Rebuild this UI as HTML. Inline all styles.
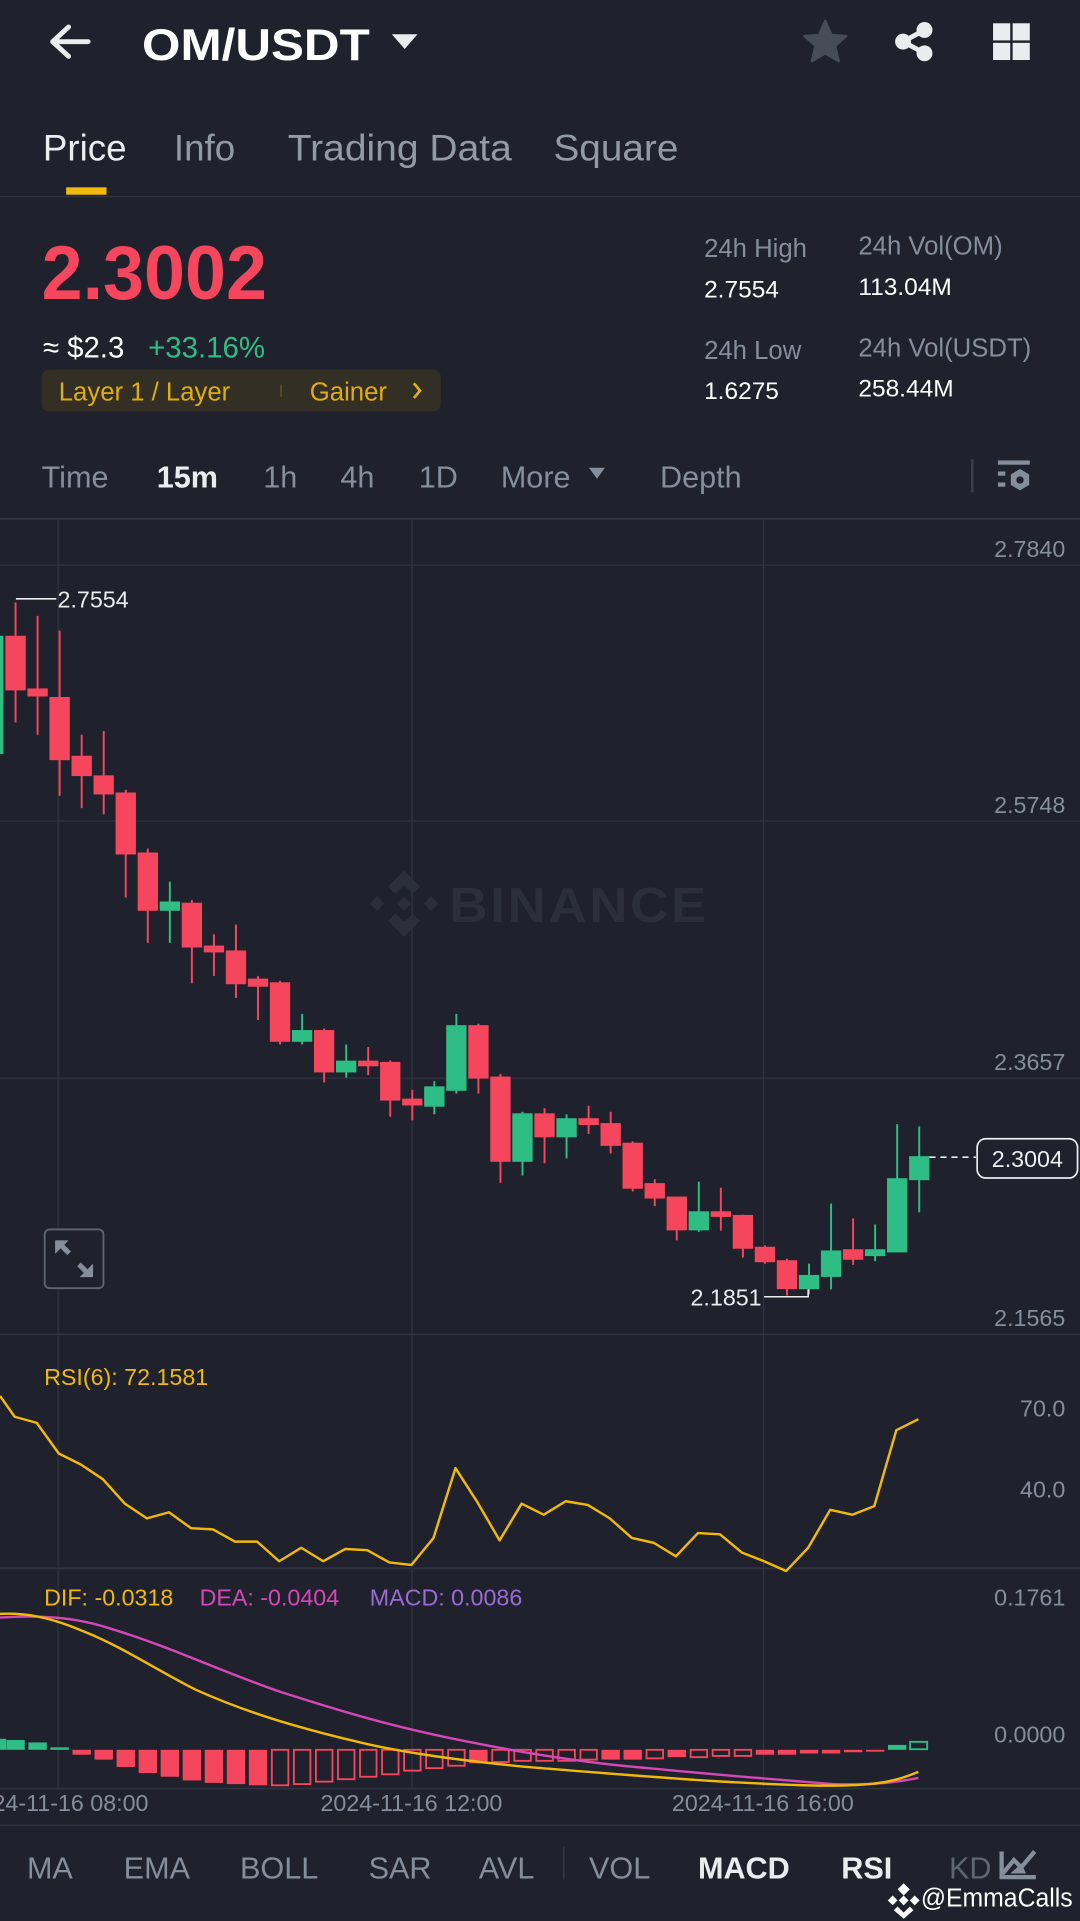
<!DOCTYPE html>
<html><head><meta charset="utf-8"><style>
html,body{margin:0;padding:0;background:#1f222c;overflow:hidden}
svg{display:block}
text{font-family:"Liberation Sans",sans-serif}
</style></head><body>
<svg width="1080" height="1921" viewBox="0 0 882 1568.8" xmlns="http://www.w3.org/2000/svg">
<rect width="882" height="1569" fill="#1f222c"/>
<g stroke="#eaecef" stroke-width="4" fill="none" stroke-linecap="round" stroke-linejoin="round"><path d="M72 34H43M56 22L43 34L56 46"/></g>
<text x="116" y="49" font-size="36" font-weight="bold" fill="#ffffff" textLength="186" lengthAdjust="spacingAndGlyphs">OM/USDT</text>
<path d="M320 28H341L330.5 40Z" fill="#eaecef"/>
<path d="M674 17L679 28.5L691 29.5L682 37.5L685 50L674 43.5L663 50L666 37.5L657 29.5L669 28.5Z" fill="#474d57" stroke="#474d57" stroke-width="2" stroke-linejoin="round"/>
<g fill="#eaecef"><circle cx="755" cy="24.5" r="6.5"/><circle cx="737.5" cy="34" r="6.5"/><circle cx="755" cy="43.5" r="6.5"/></g>
<path d="M755 24.5L737.5 34L755 43.5" stroke="#eaecef" stroke-width="4" fill="none"/>
<g fill="#eaecef"><rect x="811" y="19" width="14" height="14"/><rect x="827" y="19" width="14" height="14"/><rect x="811" y="35" width="14" height="14"/><rect x="827" y="35" width="14" height="14"/></g>
<g font-size="30" fill="#929aa5"><text x="35" y="131" fill="#eaecef">Price</text><text x="142" y="131">Info</text><text x="235" y="131" textLength="183" lengthAdjust="spacingAndGlyphs">Trading Data</text><text x="452" y="131" textLength="102" lengthAdjust="spacingAndGlyphs">Square</text></g>
<rect x="54" y="153" width="33" height="6" fill="#f0b90b"/>
<rect x="0" y="160" width="882" height="1" fill="#2f3440"/>
<text x="34" y="244" font-size="62" font-weight="bold" fill="#f6465d" textLength="184" lengthAdjust="spacingAndGlyphs">2.3002</text>
<text x="35" y="292" font-size="24" fill="#ffffff">≈ $2.3</text>
<text x="121" y="292" font-size="24" fill="#2ebd85">+33.16%</text>
<rect x="34" y="302" width="326" height="34" rx="6" fill="#332f24"/>
<g font-size="21" fill="#e0ad10"><text x="48" y="327">Layer 1 / Layer</text><text x="253" y="327">Gainer</text></g>
<rect x="229" y="314" width="1" height="10" fill="#6b5a20"/>
<path d="M338 313L343 319L338 325" stroke="#e0ad10" stroke-width="2.2" fill="none"/>
<g font-size="21" fill="#848e9c"><text x="575" y="210">24h High</text><text x="701" y="208">24h Vol(OM)</text><text x="575" y="293">24h Low</text><text x="701" y="291">24h Vol(USDT)</text></g>
<g font-size="20" fill="#ffffff"><text x="575" y="243">2.7554</text><text x="701" y="241">113.04M</text><text x="575" y="326">1.6275</text><text x="701" y="324">258.44M</text></g>
<g font-size="25" fill="#848e9c"><text x="34" y="398">Time</text><text x="128" y="398" fill="#eaecef" font-weight="bold">15m</text><text x="215" y="398">1h</text><text x="278" y="398">4h</text><text x="342" y="398">1D</text><text x="409" y="398">More</text><text x="539" y="398">Depth</text></g>
<path d="M481 382H494L487.5 391Z" fill="#848e9c"/>
<rect x="793" y="375" width="2" height="27" fill="#3a3f4a"/>
<g fill="#848e9c"><rect x="815" y="376" width="26" height="3.5"/><rect x="815" y="385" width="6" height="3.5"/><rect x="815" y="394" width="6" height="3.5"/><path d="M833 383L840.5 387.5V396L833 400.5L825.5 396V387.5Z"/></g>
<circle cx="833" cy="392" r="3" fill="#1f222c"/>
<rect x="0" y="423" width="882" height="1.5" fill="#2f3440"/>
<g fill="#2f3440"><rect x="0" y="461" width="882" height="1"/><rect x="0" y="670" width="882" height="1"/><rect x="0" y="880" width="882" height="1"/><rect x="0" y="1089" width="882" height="1.3"/><rect x="0" y="1280" width="882" height="1.5"/><rect x="0" y="1460" width="882" height="1.3"/><rect x="0" y="1490" width="882" height="1.3"/>
<rect x="47" y="424" width="1" height="1036"/><rect x="336" y="424" width="1" height="1036"/><rect x="623" y="424" width="1" height="1036"/></g>
<g font-size="19" fill="#848e9c" text-anchor="end"><text x="870" y="455">2.7840</text><text x="870" y="664">2.5748</text><text x="870" y="874">2.3657</text><text x="870" y="1083">2.1565</text><text x="870" y="1157">70.0</text><text x="870" y="1223">40.0</text><text x="870" y="1311">0.1761</text><text x="870" y="1423">0.0000</text></g>
<g fill="#2b2f3a"><path d="M330 711L343 724L337 730L330 723L323 730L317 724Z"/><path d="M302 738L308 732L314 738L308 744Z"/><path d="M346 738L352 732L358 738L352 744Z"/><path d="M324 738L330 732L336 738L330 744Z"/><path d="M317 752L323 746L330 753L337 746L343 752L330 765Z"/></g>
<text x="367" y="753" font-size="40" font-weight="bold" fill="#2b2f3a" letter-spacing="2" textLength="212" lengthAdjust="spacingAndGlyphs">BINANCE</text>
<g stroke-width="1.6" fill="#2ebd85" stroke="#2ebd85"><rect x="-13" y="520" width="15" height="95"/></g>
<g stroke-width="1.6" fill="#f6465d" stroke="#f6465d">
<line x1="12.7" y1="492" x2="12.7" y2="590"/><rect x="5.2" y="520" width="15" height="43"/>
<line x1="30.7" y1="503" x2="30.7" y2="600"/><rect x="23.2" y="563" width="15" height="5"/>
<line x1="48.7" y1="515" x2="48.7" y2="650"/><rect x="41.2" y="570" width="15" height="50"/>
<line x1="66.7" y1="600" x2="66.7" y2="660"/><rect x="59.2" y="618" width="15" height="15"/>
<line x1="84.7" y1="597" x2="84.7" y2="665"/><rect x="77.2" y="634" width="15" height="14"/>
<line x1="102.7" y1="645" x2="102.7" y2="733"/><rect x="95.2" y="648" width="15" height="49"/>
<line x1="120.7" y1="693" x2="120.7" y2="770"/><rect x="113.2" y="697" width="15" height="46"/>
<line x1="156.7" y1="735" x2="156.7" y2="803"/><rect x="149.2" y="738" width="15" height="35"/>
<line x1="174.7" y1="763" x2="174.7" y2="797"/><rect x="167.2" y="773" width="15" height="4"/>
<line x1="192.7" y1="755" x2="192.7" y2="815"/><rect x="185.2" y="777" width="15" height="26"/>
<line x1="210.7" y1="797" x2="210.7" y2="833"/><rect x="203.2" y="800" width="15" height="5"/>
<line x1="228.7" y1="801" x2="228.7" y2="853"/><rect x="221.2" y="803" width="15" height="47"/>
<line x1="264.7" y1="840" x2="264.7" y2="884"/><rect x="257.2" y="842" width="15" height="33"/>
<line x1="300.7" y1="855" x2="300.7" y2="878"/><rect x="293.2" y="867" width="15" height="3"/>
<line x1="318.7" y1="866" x2="318.7" y2="912"/><rect x="311.2" y="868" width="15" height="30"/>
<line x1="336.7" y1="890" x2="336.7" y2="915"/><rect x="329.2" y="898" width="15" height="4"/>
<line x1="390.7" y1="836" x2="390.7" y2="893"/><rect x="383.2" y="838" width="15" height="42"/>
<line x1="408.7" y1="877" x2="408.7" y2="966"/><rect x="401.2" y="880" width="15" height="68"/>
<line x1="444.7" y1="905" x2="444.7" y2="950"/><rect x="437.2" y="910" width="15" height="18"/>
<line x1="480.7" y1="903" x2="480.7" y2="926"/><rect x="473.2" y="914" width="15" height="4"/>
<line x1="498.7" y1="908" x2="498.7" y2="942"/><rect x="491.2" y="918" width="15" height="17"/>
<line x1="516.7" y1="932" x2="516.7" y2="973"/><rect x="509.2" y="934" width="15" height="36"/>
<line x1="534.7" y1="963" x2="534.7" y2="985"/><rect x="527.2" y="967" width="15" height="11"/>
<line x1="552.7" y1="978" x2="552.7" y2="1013"/><rect x="545.2" y="978" width="15" height="26"/>
<line x1="588.7" y1="970" x2="588.7" y2="1005"/><rect x="581.2" y="990" width="15" height="3"/>
<line x1="606.7" y1="992" x2="606.7" y2="1027"/><rect x="599.2" y="993" width="15" height="26"/>
<line x1="624.7" y1="1017" x2="624.7" y2="1032"/><rect x="617.2" y="1019" width="15" height="11"/>
<line x1="642.7" y1="1028" x2="642.7" y2="1058"/><rect x="635.2" y="1030" width="15" height="22"/>
<line x1="696.7" y1="995" x2="696.7" y2="1033"/><rect x="689.2" y="1021" width="15" height="7"/>
</g>
<g stroke-width="1.6" fill="#2ebd85" stroke="#2ebd85">
<line x1="138.7" y1="720" x2="138.7" y2="770"/><rect x="131.2" y="737" width="15" height="6"/>
<line x1="246.7" y1="828" x2="246.7" y2="853"/><rect x="239.2" y="842" width="15" height="8"/>
<line x1="282.7" y1="853" x2="282.7" y2="880"/><rect x="275.2" y="867" width="15" height="8"/>
<line x1="354.7" y1="883" x2="354.7" y2="910"/><rect x="347.2" y="888" width="15" height="15"/>
<line x1="372.7" y1="828" x2="372.7" y2="893"/><rect x="365.2" y="838" width="15" height="52"/>
<line x1="426.7" y1="908" x2="426.7" y2="960"/><rect x="419.2" y="910" width="15" height="38"/>
<line x1="462.7" y1="910" x2="462.7" y2="946"/><rect x="455.2" y="914" width="15" height="14"/>
<line x1="570.7" y1="965" x2="570.7" y2="1006"/><rect x="563.2" y="990" width="15" height="14"/>
<line x1="660.7" y1="1032" x2="660.7" y2="1057"/><rect x="653.2" y="1042" width="15" height="10"/>
<line x1="678.7" y1="983" x2="678.7" y2="1053"/><rect x="671.2" y="1022" width="15" height="20"/>
<line x1="714.7" y1="1000" x2="714.7" y2="1030"/><rect x="707.2" y="1021" width="15" height="4"/>
<line x1="732.7" y1="918" x2="732.7" y2="1022"/><rect x="725.2" y="963" width="15" height="59"/>
<line x1="750.7" y1="920" x2="750.7" y2="990"/><rect x="743.2" y="945" width="15" height="18"/>
</g>
<path d="M13 489H46" stroke="#eaecef" stroke-width="1.3"/>
<text x="47" y="496" font-size="19" fill="#eaecef">2.7554</text>
<path d="M624 1059H660V1053" stroke="#eaecef" stroke-width="1.3" fill="none"/>
<text x="622" y="1066" font-size="19" fill="#eaecef" text-anchor="end">2.1851</text>
<path d="M759 945H797" stroke="#eaecef" stroke-width="1.3" stroke-dasharray="5 4"/>
<rect x="798" y="930" width="82" height="32" rx="7" fill="#1f222c" stroke="#eaecef" stroke-width="1.4"/>
<text x="839" y="953" font-size="19" fill="#eaecef" text-anchor="middle">2.3004</text>
<rect x="36.5" y="1004" width="48" height="48" rx="4" fill="#1f222c" stroke="#5f6673" stroke-width="1.5"/>
<g fill="#848e9c"><path d="M45 1013H56L52.5 1016.5L58 1022L55 1025L49.5 1019.5L45 1024Z"/><path d="M76 1043H65L68.5 1039.5L63 1034L66 1031L71.5 1036.5L76 1032Z"/></g>
<text x="36" y="1131" font-size="19" fill="#f0b90b">RSI(6): 72.1581</text>
<polyline fill="none" stroke="#f0b90b" stroke-width="2" stroke-linejoin="round" points="0,1140 12,1157 30,1162 48,1187 66,1196 84,1208 102,1228 120,1240 138,1235 156,1248 174,1249 192,1259 210,1259 228,1275 246,1264 264,1275 282,1265 300,1266 318,1276 336,1278 354,1256 372,1199 390,1227 408,1258 426,1228 444,1237 462,1226 480,1229 498,1240 516,1256 534,1260 552,1271 570,1252 588,1253 606,1268 624,1275 642,1283 660,1264 678,1233 696,1237 714,1230 732,1168 750,1159"/>
<text x="36" y="1311" font-size="19" fill="#f0b90b">DIF: -0.0318</text>
<text x="163" y="1311" font-size="19" fill="#d548b8">DEA: -0.0404</text>
<text x="302" y="1311" font-size="19" fill="#9b6ad6">MACD: 0.0086</text>
<g fill="#2ebd85"><rect x="-5" y="1420" width="10" height="9"/><rect x="5.2" y="1421" width="15" height="8"/><rect x="23.2" y="1423" width="15" height="6"/><rect x="41.2" y="1427" width="15" height="2"/><rect x="725.2" y="1425" width="15" height="4"/></g>
<rect x="743.2" y="1422.5" width="14" height="6" fill="none" stroke="#2ebd85" stroke-width="1.5"/>
<g fill="#f6465d"><rect x="59.2" y="1429" width="15" height="4"/><rect x="77.2" y="1429" width="15" height="8"/><rect x="95.2" y="1429" width="15" height="14"/><rect x="113.2" y="1429" width="15" height="19"/><rect x="131.2" y="1429" width="15" height="22"/><rect x="149.2" y="1429" width="15" height="25"/><rect x="167.2" y="1429" width="15" height="27"/><rect x="185.2" y="1429" width="15" height="28"/><rect x="203.2" y="1429" width="15" height="29"/><rect x="383.2" y="1429" width="15" height="11"/><rect x="491.2" y="1429" width="15" height="8"/><rect x="509.2" y="1429" width="15" height="8"/><rect x="545.2" y="1429" width="15" height="6"/><rect x="617.2" y="1429" width="15" height="4"/><rect x="635.2" y="1429" width="15" height="4"/><rect x="653.2" y="1429" width="15" height="3"/><rect x="671.2" y="1429" width="15" height="3"/><rect x="689.2" y="1429" width="15" height="2"/><rect x="707.2" y="1429" width="15" height="1.5"/></g>
<g fill="none" stroke="#f6465d" stroke-width="1.5"><rect x="222" y="1429" width="13.5" height="29"/><rect x="240" y="1429" width="13.5" height="28"/><rect x="258" y="1429" width="13.5" height="26"/><rect x="276" y="1429" width="13.5" height="24"/><rect x="294" y="1429" width="13.5" height="22"/><rect x="312" y="1429" width="13.5" height="20"/><rect x="330" y="1429" width="13.5" height="17"/><rect x="348" y="1429" width="13.5" height="15"/><rect x="366" y="1429" width="13.5" height="13"/><rect x="402" y="1429" width="13.5" height="10"/><rect x="420" y="1429" width="13.5" height="9"/><rect x="438" y="1429" width="13.5" height="9"/><rect x="456" y="1429" width="13.5" height="9"/><rect x="474" y="1429" width="13.5" height="8"/><rect x="528" y="1429" width="13.5" height="7"/><rect x="564" y="1429" width="13.5" height="6"/><rect x="582" y="1429" width="13.5" height="5"/><rect x="600" y="1429" width="13.5" height="5"/></g>
<path fill="none" stroke="#d548b8" stroke-width="2" d="M0,1321 C30,1319 60,1320 90,1330 C140,1345 180,1365 230,1382 C280,1398 320,1410 380,1422 C430,1432 480,1440 530,1444 C580,1449 630,1453 680,1457 C710,1458 730,1456 750,1452"/>
<path fill="none" stroke="#f0b90b" stroke-width="2" d="M0,1318 C20,1317 40,1320 70,1333 C100,1345 130,1365 160,1380 C200,1398 240,1410 290,1422 C330,1432 380,1438 430,1443 C480,1447 540,1452 590,1455 C630,1457 680,1460 710,1457 C730,1455 740,1451 750,1447"/>
<g font-size="19" fill="#848e9c" text-anchor="middle"><text x="47" y="1479">2024-11-16 08:00</text><text x="336" y="1479">2024-11-16 12:00</text><text x="623" y="1479">2024-11-16 16:00</text></g>
<g font-size="25" fill="#848e9c"><text x="22" y="1534">MA</text><text x="101" y="1534">EMA</text><text x="196" y="1534">BOLL</text><text x="301" y="1534">SAR</text><text x="391" y="1534">AVL</text><text x="481" y="1534">VOL</text><text x="570" y="1534" fill="#eaecef" font-weight="bold">MACD</text><text x="687" y="1534" fill="#eaecef" font-weight="bold">RSI</text><text x="775" y="1534" fill="#5f6673">KD</text></g>
<rect x="460" y="1508" width="1" height="27" fill="#3a3f4a"/>
<path d="M818 1512V1533H846M819 1530L828 1519L834 1525L845 1512" stroke="#848e9c" stroke-width="3.5" fill="none"/>
<path d="M825 1530L834 1522L838 1530Z" fill="#848e9c"/>
<g fill="#ffffff"><path d="M738 1538L743 1543L738 1548L733 1543Z"/><path d="M729 1548L733 1552L729 1556L725 1552Z"/><path d="M747 1548L751 1552L747 1556L743 1552Z"/><path d="M738 1548L742 1552L738 1556L734 1552Z"/><path d="M733 1557L738 1562L743 1557L746 1560L738 1567L730 1560Z"/></g>
<text x="752" y="1557" font-size="21" fill="#ffffff" textLength="124" lengthAdjust="spacingAndGlyphs">@EmmaCalls</text>
</svg>
</body></html>
